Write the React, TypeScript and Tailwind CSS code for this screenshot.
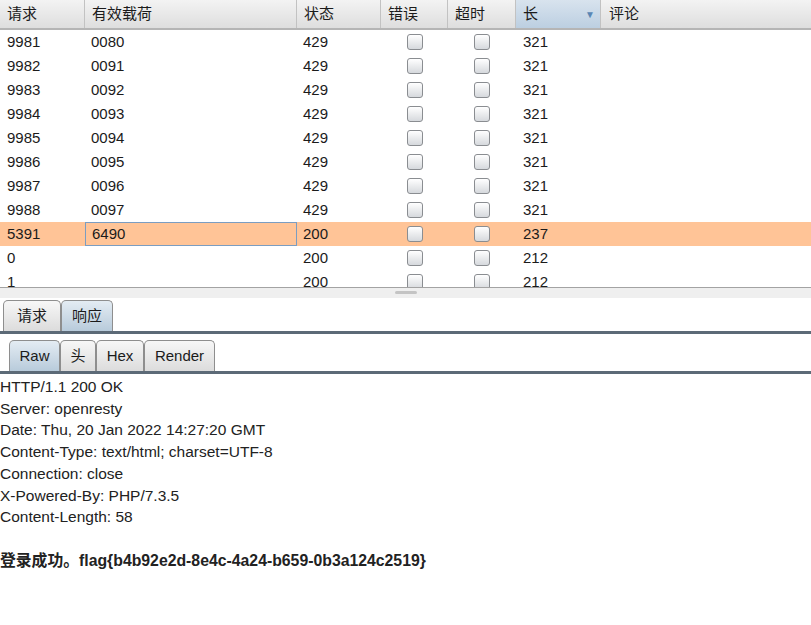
import React from "react";

type Row = {
  id: string;
  payload: string;
  status: string;
  length: string;
  selected?: boolean;
};

const rows: Row[] = [
  { id: "9981", payload: "0080", status: "429", length: "321" },
  { id: "9982", payload: "0091", status: "429", length: "321" },
  { id: "9983", payload: "0092", status: "429", length: "321" },
  { id: "9984", payload: "0093", status: "429", length: "321" },
  { id: "9985", payload: "0094", status: "429", length: "321" },
  { id: "9986", payload: "0095", status: "429", length: "321" },
  { id: "9987", payload: "0096", status: "429", length: "321" },
  { id: "9988", payload: "0097", status: "429", length: "321" },
  { id: "5391", payload: "6490", status: "200", length: "237", selected: true },
  { id: "0", payload: "", status: "200", length: "212" },
  { id: "1", payload: "", status: "200", length: "212" },
];

const headerLines = [
  "HTTP/1.1 200 OK",
  "Server: openresty",
  "Date: Thu, 20 Jan 2022 14:27:20 GMT",
  "Content-Type: text/html; charset=UTF-8",
  "Connection: close",
  "X-Powered-By: PHP/7.3.5",
  "Content-Length: 58",
];

const Checkbox = () => (
  <div className="w-[16px] h-[16px] rounded-[3px] border border-[#8a8d91] bg-gradient-to-b from-[#ffffff] to-[#d6d9dd]" />
);

const HeadCell = ({ label, width, sorted }: { label: string; width: string; sorted?: boolean }) => (
  <div
    className={`${width} h-full flex items-center pl-[7px] border-r border-[#c2c2c2] ${
      sorted ? "bg-gradient-to-b from-[#d8e3ee] to-[#bccfe1] justify-between pr-[5px]" : ""
    }`}
  >
    <span>{label}</span>
    {sorted && <span className="text-[10px] text-[#5a86b4]">▼</span>}
  </div>
);

const Tab = ({ label, active, width }: { label: string; active?: boolean; width: string }) => (
  <div
    className={`${width} h-[31px] flex items-center justify-center border border-b-0 border-[#8e8e8e] rounded-t-[5px] text-[15px] ${
      active ? "bg-gradient-to-b from-[#e4ecf3] to-[#b8cbdb]" : "bg-gradient-to-b from-[#f7f7f7] to-[#dcdcdc]"
    }`}
  >
    {label}
  </div>
);

export default function App() {
  return (
    <div
      className="w-[811px] h-[625px] bg-white text-[#1b1b1b] text-[14px] overflow-hidden"
      style={{ fontFamily: '"Liberation Sans", Arial, "Noto Sans CJK SC", sans-serif' }}
    >
      {/* table */}
      <div className="h-[288px] border-b border-[#a3a3a3] overflow-hidden">
        <div className="flex h-[30px] border-b-2 border-[#b5b5b5] bg-gradient-to-b from-[#f3f3f3] to-[#dedede] text-[15px]">
          <HeadCell label="请求" width="w-[85px]" />
          <HeadCell label="有效载荷" width="w-[212px]" />
          <HeadCell label="状态" width="w-[84px]" />
          <HeadCell label="错误" width="w-[67px]" />
          <HeadCell label="超时" width="w-[68px]" />
          <HeadCell label="长" width="w-[85px]" sorted />
          <div className="flex-1 h-full flex items-center pl-[8px]">评论</div>
        </div>
        {rows.map((r) => (
          <div key={r.id} className={`flex h-[24px] items-center text-[15px] ${r.selected ? "bg-[#ffc497]" : ""}`}>
            <div className="w-[85px] pl-[7px]">{r.id}</div>
            <div
              className={`w-[212px] h-full flex items-center pl-[6px] ${
                r.selected ? "border border-[#7b9dc1]" : ""
              }`}
            >
              {r.payload}
            </div>
            <div className="w-[84px] pl-[6px]">{r.status}</div>
            <div className="w-[67px] flex justify-center">
              <Checkbox />
            </div>
            <div className="w-[68px] flex justify-center">
              <Checkbox />
            </div>
            <div className="w-[85px] pl-[7px]">{r.length}</div>
            <div className="flex-1" />
          </div>
        ))}
      </div>

      {/* splitter */}
      <div className="h-[10px] bg-[#efefef] flex justify-center items-start pt-[3px]">
        <div className="w-[22px] h-[3px] rounded-full bg-[#c4c4c4]" />
      </div>

      {/* request / response tabs */}
      <div className="pt-[2px] pl-[3px] flex border-b-[3px] border-[#5c6a77]">
        <Tab label="请求" width="w-[58px]" />
        <Tab label="响应" width="w-[52px]" active />
      </div>

      {/* sub tabs */}
      <div className="pt-[6px] pl-[9px] flex border-b-[3px] border-[#5c6a77]">
        <Tab label="Raw" width="w-[51px]" active />
        <Tab label="头" width="w-[36px]" />
        <Tab label="Hex" width="w-[48px]" />
        <Tab label="Render" width="w-[71px]" />
      </div>

      {/* raw response */}
      <div className="pt-[2px] leading-[21.7px] text-[15.5px] text-[#222]">
        {headerLines.map((l) => (
          <div key={l}>{l}</div>
        ))}
        <div>&nbsp;</div>
        <div className="font-bold text-[15.8px]">
          登录成功。flag{"{"}b4b92e2d-8e4c-4a24-b659-0b3a124c2519{"}"}
        </div>
      </div>
    </div>
  );
}
